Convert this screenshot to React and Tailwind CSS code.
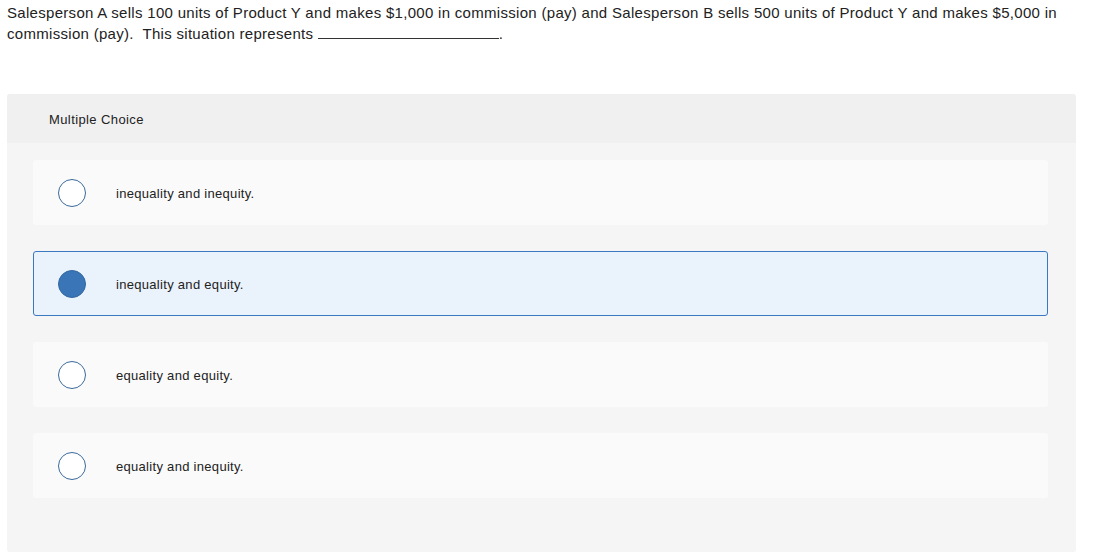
import React, { useState } from 'react';

const options = [
  'inequality and inequity.',
  'inequality and equity.',
  'equality and equity.',
  'equality and inequity.',
];

const App = () => {
  const [selected, setSelected] = useState(1);

  return (
    <div className="min-h-screen bg-white text-[#222] font-['Liberation_Sans',Arial,sans-serif]">
      {/* Question */}
      <p className="pl-[7px] pr-4 pt-[2px] text-[15px] leading-[21px] tracking-[0.3px] whitespace-nowrap">
        Salesperson A sells 100 units of Product Y and makes $1,000 in commission (pay) and Salesperson B sells 500 units of Product Y and makes $5,000 in
        <br />
        commission (pay).&nbsp; This situation represents{' '}
        <span className="inline-block w-[181px] h-[16px] border-b border-[#333] align-baseline" />.
      </p>

      {/* Multiple choice panel */}
      <div className="ml-[7px] mt-[50px] w-[1069px] h-[458px] rounded-[3px] bg-[#f5f5f5] overflow-hidden">
        <div className="h-[49px] bg-[#f0f0f0] flex items-center pl-[42px] pt-[2px] text-[13px] tracking-[0.4px]">
          Multiple Choice
        </div>

        <div className="flex flex-col gap-[26px] pt-[17px] pl-[26px] pr-[28px]">
          {options.map((opt, i) => {
            const active = selected === i;
            return (
              <button
                key={opt}
                type="button"
                onClick={() => setSelected(i)}
                className={`flex items-center h-[65px] rounded-[3px] text-left ${
                  active ? 'bg-[#eaf2fb] border border-[#3b78c2]' : 'bg-[#fafafa] border border-transparent'
                }`}
              >
                <span
                  className={`ml-[24px] w-[28px] h-[28px] rounded-full border-[1.5px] shrink-0 ${
                    active ? 'bg-[#3a75b8] border-[#34689f]' : 'bg-white border-[#3a6a9c]'
                  }`}
                />
                <span className="ml-[30px] pt-[2px] text-[13px] tracking-[0.3px]">{opt}</span>
              </button>
            );
          })}
        </div>
      </div>
    </div>
  );
};

export default App;
